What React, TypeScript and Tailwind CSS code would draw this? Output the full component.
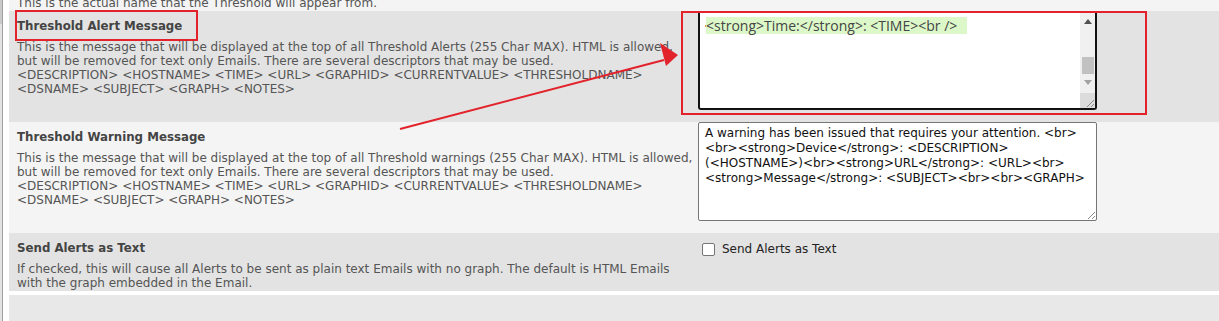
import React from "react";

const DESC_ALERT = [
  "This is the message that will be displayed at the top of all Threshold Alerts (255 Char MAX). HTML is allowed,",
  "but will be removed for text only Emails. There are several descriptors that may be used.",
  "<DESCRIPTION> <HOSTNAME> <TIME> <URL> <GRAPHID> <CURRENTVALUE> <THRESHOLDNAME>",
  "<DSNAME> <SUBJECT> <GRAPH> <NOTES>",
];
const DESC_WARN = [
  "This is the message that will be displayed at the top of all Threshold warnings (255 Char MAX). HTML is allowed,",
  "but will be removed for text only Emails. There are several descriptors that may be used.",
  "<DESCRIPTION> <HOSTNAME> <TIME> <URL> <GRAPHID> <CURRENTVALUE> <THRESHOLDNAME>",
  "<DSNAME> <SUBJECT> <GRAPH> <NOTES>",
];
const DESC_TEXT = [
  "If checked, this will cause all Alerts to be sent as plain text Emails with no graph. The default is HTML Emails",
  "with the graph embedded in the Email.",
];
const WARN_LINES = [
  "A warning has been issued that requires your attention. <br>",
  "<br><strong>Device</strong>: <DESCRIPTION>",
  "(<HOSTNAME>)<br><strong>URL</strong>: <URL><br>",
  "<strong>Message</strong>: <SUBJECT><br><br><GRAPH>",
];

function Grip() {
  return (
    <svg width="10" height="10" viewBox="0 0 10 10" className="block">
      <path d="M9 2 L2 9 M9 6 L6 9" stroke="#8a8a8a" strokeWidth="1" fill="none" />
    </svg>
  );
}

function LeftCell({ title, lines }: { title: string; lines: string[] }) {
  return (
    <div className="w-[689px] shrink-0 pl-2 pt-[8px] font-['DejaVu_Sans',Verdana,sans-serif]">
      <div className="text-[11.8px] leading-[14px] font-bold text-[#444] whitespace-nowrap">{title}</div>
      <div className="mt-[7px] text-[12px] leading-[14px] text-[#555] whitespace-nowrap">
        {lines.map((l, i) => (
          <div key={i}>{l}</div>
        ))}
      </div>
    </div>
  );
}

export default function App() {
  return (
    <div className="relative w-[1219px] h-[321px] overflow-hidden bg-white flex font-['DejaVu_Sans',Verdana,sans-serif]">
      {/* left frame edge */}
      <div className="w-[2px] flex flex-col shrink-0">
        <div className="h-[24px] bg-[#c9c9c9]" />
        <div className="flex-1 bg-[#e2e2e2]" />
      </div>
      <div className="w-px bg-[#a0a0a0] shrink-0" />
      <div className="w-[6px] shrink-0 bg-white" />

      <div className="flex-1 flex flex-col">
        {/* partial top row */}
        <div className="h-[11px] bg-[#f4f4f4] overflow-hidden pl-2">
          <div className="-mt-[4px] text-[12px] leading-[14px] text-[#555] whitespace-nowrap">
            This is the actual name that the Threshold will appear from.
          </div>
        </div>

        {/* Threshold Alert Message */}
        <div className="h-[111px] bg-[#e3e3e3] flex">
          <LeftCell title="Threshold Alert Message" lines={DESC_ALERT} />
          <div className="flex-1">
            <div className="w-[399px] h-[99px] border-2 border-t-0 border-[#111] rounded-b-[3px] bg-white flex overflow-hidden">
              <div className="flex-1 relative">
                <div className="flex items-start h-[3px] pl-[47px] gap-[38px]">
                  <div className="w-[2px] h-[2px] bg-[#222]" />
                  <div className="w-[2px] h-[2px] bg-[#222]" />
                  <div className="w-[2px] h-[2px] bg-[#222]" />
                  <div className="ml-[62px] w-[52px] border-t-2 border-dotted border-[#e03030]" />
                  <div className="ml-[40px] w-[13px] border-t-2 border-dotted border-[#e03030]" />
                </div>
                <div className="mt-[3px] ml-[5px] flex items-center">
                  <div className="w-px h-[2px] bg-[#e8a030]" />
                  <div className="h-[17px] w-[261px] bg-[#dcf8c9] text-[14px] leading-[17px] text-[#444] whitespace-nowrap font-['Open_Sans',sans-serif]">
                    {"<strong>Time:</strong>: <TIME><br />"}
                  </div>
                </div>
              </div>
              <div className="w-[15px] bg-[#f0f0f0] flex flex-col items-center">
                <div className="h-[82px] w-full flex flex-col items-center">
                  <svg width="8" height="5" viewBox="0 0 8 5" className="mt-[8px]">
                    <path d="M0 5 L4 0 L8 5 Z" fill="#505050" />
                  </svg>
                  <div className="mt-[33px] w-[12px] h-[17px] bg-[#c1c1c1]" />
                  <svg width="8" height="5" viewBox="0 0 8 5" className="mt-[6px]">
                    <path d="M0 0 L4 5 L8 0 Z" fill="#a3a3a3" />
                  </svg>
                </div>
                <div className="flex-1 w-full bg-[#dcdcdc] flex items-end justify-end">
                  <Grip />
                </div>
              </div>
            </div>
          </div>
        </div>

        {/* Threshold Warning Message */}
        <div className="h-[111px] bg-[#f4f4f4] flex">
          <LeftCell title="Threshold Warning Message" lines={DESC_WARN} />
          <div className="flex-1">
            <div className="w-[399px] h-[99px] border border-[#767676] rounded-[2px] bg-white flex flex-col">
              <div className="flex-1 pl-[6px] pt-[3px] text-[12px] leading-[15px] text-[#111] whitespace-nowrap">
                {WARN_LINES.map((l, i) => (
                  <div key={i}>{l}</div>
                ))}
              </div>
              <div className="flex justify-end">
                <Grip />
              </div>
            </div>
          </div>
        </div>

        {/* Send Alerts as Text */}
        <div className="h-[58px] bg-[#e3e3e3] flex">
          <LeftCell title="Send Alerts as Text" lines={DESC_TEXT} />
          <div className="flex-1 pt-[9px] pl-[4px]">
            <label className="flex items-center gap-[7px] text-[12px] leading-[14px] text-[#222]">
              <span className="w-[13px] h-[13px] rounded-[2px] border border-[#767676] bg-white" />
              <span>Send Alerts as Text</span>
            </label>
          </div>
        </div>

        <div className="h-[4px] bg-white" />
        <div className="flex-1 bg-[#e8e8e8]" />
      </div>

      {/* annotations */}
      <div className="absolute left-[15px] top-[10px] w-[183px] h-[31px] border-2 border-[#e3232c]" />
      <div className="absolute left-[681px] top-[11px] w-[466px] h-[104px] border-2 border-[#e3232c]" />
      <svg className="absolute left-0 top-0" width="1219" height="321" viewBox="0 0 1219 321">
        <line x1="400" y1="129" x2="664" y2="60" stroke="#e3232c" strokeWidth="2" />
        <path d="M678 55 L660 43 L666 66 Z" fill="#e3232c" />
      </svg>
    </div>
  );
}
